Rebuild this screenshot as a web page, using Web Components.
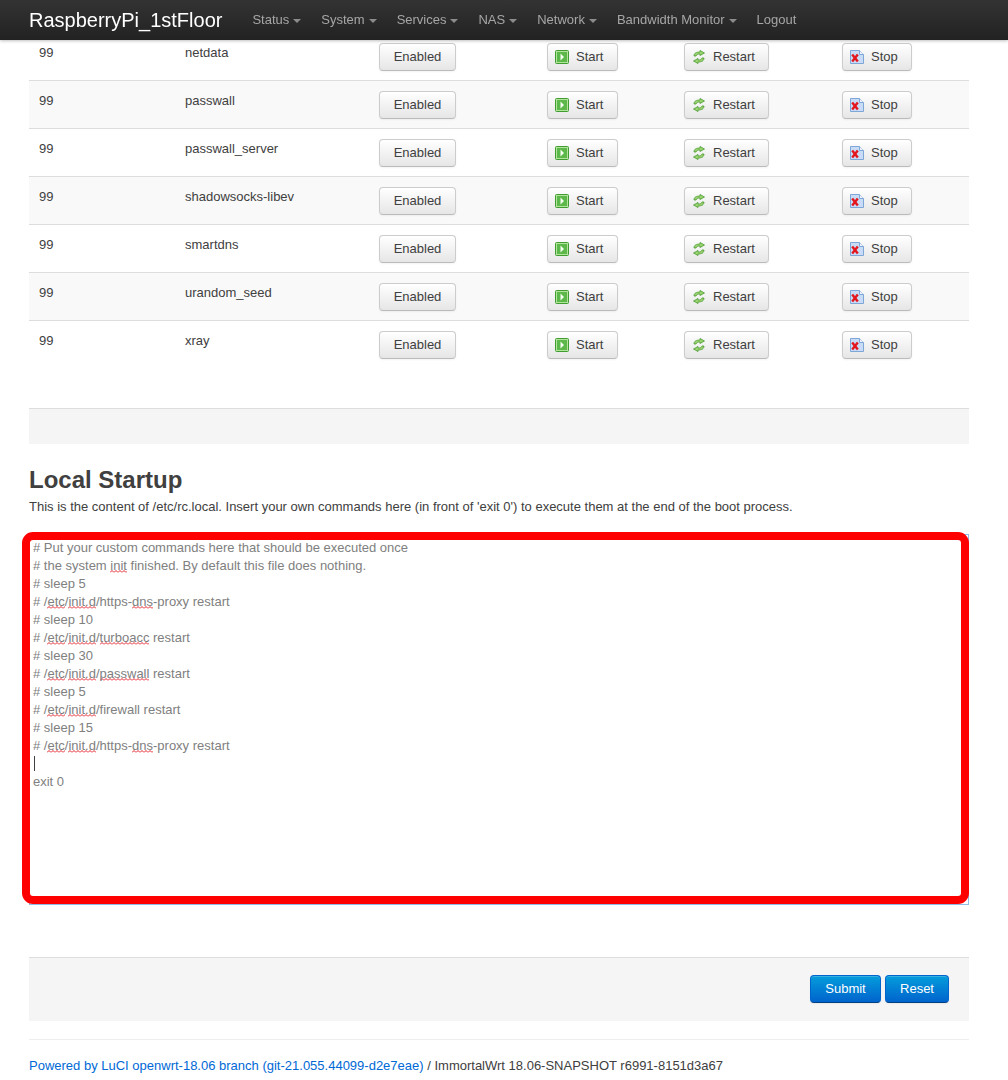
<!DOCTYPE html>
<html lang="en">
<head>
<meta charset="utf-8">
<title>RaspberryPi_1stFloor - Startup</title>
<style>
  html, body { margin: 0; background: #fff; }
  body { font: 13px/18px "Liberation Sans", Arial, sans-serif; color: #404040; }
</style>
</head>
<body>

<luci-navbar brand="RaspberryPi_1stFloor">
  <nav-item menu>Status</nav-item>
  <nav-item menu>System</nav-item>
  <nav-item menu>Services</nav-item>
  <nav-item menu>NAS</nav-item>
  <nav-item menu>Network</nav-item>
  <nav-item menu>Bandwidth Monitor</nav-item>
  <nav-item>Logout</nav-item>
</luci-navbar>

<luci-page>
  <init-table>
    <init-row prio="99" name="netdata"></init-row>
    <init-row prio="99" name="passwall" odd></init-row>
    <init-row prio="99" name="passwall_server"></init-row>
    <init-row prio="99" name="shadowsocks-libev" odd></init-row>
    <init-row prio="99" name="smartdns"></init-row>
    <init-row prio="99" name="urandom_seed" odd></init-row>
    <init-row prio="99" name="xray"></init-row>
  </init-table>
  <luci-bar slim></luci-bar>
  <local-startup>
    <span slot="title">Local Startup</span>
    <span slot="desc">This is the content of /etc/rc.local. Insert your own commands here (in front of 'exit 0') to execute them at the end of the boot process.</span>
    <code-box>
      <code-line># Put your custom commands here that should be executed once</code-line>
      <code-line># the system <spell-err>init</spell-err> finished. By default this file does nothing.</code-line>
      <code-line># sleep 5</code-line>
      <code-line># /<spell-err>etc</spell-err>/<spell-err>init.d</spell-err>/https-<spell-err>dns</spell-err>-proxy restart</code-line>
      <code-line># sleep 10</code-line>
      <code-line># /<spell-err>etc</spell-err>/<spell-err>init.d</spell-err>/<spell-err>turboacc</spell-err> restart</code-line>
      <code-line># sleep 30</code-line>
      <code-line># /<spell-err>etc</spell-err>/<spell-err>init.d</spell-err>/<spell-err>passwall</spell-err> restart</code-line>
      <code-line># sleep 5</code-line>
      <code-line># /<spell-err>etc</spell-err>/<spell-err>init.d</spell-err>/firewall restart</code-line>
      <code-line># sleep 15</code-line>
      <code-line># /<spell-err>etc</spell-err>/<spell-err>init.d</spell-err>/https-<spell-err>dns</spell-err>-proxy restart</code-line>
      <code-line><text-caret></text-caret></code-line>
      <code-line>exit 0</code-line>
    </code-box>
  </local-startup>
  <luci-bar>
    <luci-btn kind="primary" width="71">Submit</luci-btn>
    <luci-btn kind="primary" width="64">Reset</luci-btn>
  </luci-bar>
  <luci-footer>
    <a href="#">Powered by LuCI openwrt-18.06 branch (git-21.055.44099-d2e7eae)</a> / ImmortalWrt 18.06-SNAPSHOT r6991-8151d3a67
  </luci-footer>
</luci-page>

<script>
const ARROW = "M1 6C1 3 3.500 2 7 2V.5L11.500 3 7 5.500V4C5 4 3.500 4.500 3 6Z";

const ICONS = {
  start: `<svg width="14" height="14" viewBox="0 0 14 14">
      <rect x=".5" y=".5" width="13" height="13" rx="1" fill="#b5e49c" stroke="#3e9c31"/>
      <rect x="2" y="2" width="10" height="10" fill="#5cb84a"/>
      <path d="M5.500 3.500 9 7l-3.500 3.500z" fill="#f4fff0"/>
    </svg>`,
  restart: `<svg width="12" height="14" viewBox="0 0 12 14" style="margin:0 8px 0 1px">
      <g fill="#9bd46e" stroke="#4a9a35" stroke-width=".8" stroke-linejoin="round">
        <path d="${ARROW}"/>
        <path transform="rotate(180 6 7)" d="${ARROW}"/>
      </g>
    </svg>`,
  stop: `<svg width="14" height="14" viewBox="0 0 14 14">
      <path d="M.5.500H9.500L13.500 4.500V13.500H.5z" fill="#c8dcf5" stroke="#7fa6d8"/>
      <path d="M9.500.500V4.500H13.500" fill="#eef5fd" stroke="#7fa6d8"/>
      <path d="M2.200 4.500 7.800 11.500M7.800 4.500 2.200 11.500" stroke="#e3161e" stroke-width="2.400" fill="none"/>
    </svg>`
};

class LuciNavbar extends HTMLElement {
  constructor() {
    super();
    this.attachShadow({ mode: "open" });
  }
  connectedCallback() {
    this.shadowRoot.innerHTML = `
      <style>
        :host {
          position: fixed; top: 0; left: 0; right: 0; z-index: 10;
          display: flex; align-items: center;
          height: 40px; box-sizing: border-box;
          padding-left: 29px;
          background: linear-gradient(#333, #222);
          box-shadow: 0 1px 3px rgba(0,0,0,.25);
        }
        .brand { font-size: 20px; line-height: 40px; color: #fff; margin-right: 20px; }
        nav { display: flex; }
      </style>
      <span class="brand">${this.getAttribute("brand")}</span>
      <nav><slot></slot></nav>`;
  }
}

class NavItem extends HTMLElement {
  constructor() {
    super();
    this.attachShadow({ mode: "open" });
  }
  connectedCallback() {
    this.shadowRoot.innerHTML = `
      <style>
        :host { display: flex; align-items: center; padding: 0 10px; color: #a6a6a6; font-size: 13px; line-height: 40px; }
        .caret { margin: 1px 0 0 4px; border: 4px solid transparent; border-top-color: #8c8c8c; border-bottom: 0; }
      </style>
      <slot></slot>${this.hasAttribute("menu") ? '<span class="caret"></span>' : ""}`;
  }
}

class LuciPage extends HTMLElement {
  constructor() {
    super();
    this.attachShadow({ mode: "open" });
    this.shadowRoot.innerHTML = `
      <style>:host { display: block; padding: 32px 39px 0 29px; }</style>
      <slot></slot>`;
  }
}

class InitTable extends HTMLElement {
  constructor() {
    super();
    this.attachShadow({ mode: "open" });
    this.shadowRoot.innerHTML = `
      <style>:host { display: block; margin-bottom: 40px; }</style>
      <slot></slot>`;
  }
}

class InitRow extends HTMLElement {
  constructor() {
    super();
    this.attachShadow({ mode: "open" });
  }
  connectedCallback() {
    this.shadowRoot.innerHTML = `
      <style>
        :host {
          display: grid;
          grid-template-columns: 146px 194px 168px 137px 158px 137px;
          height: 48px; box-sizing: border-box;
          border-top: 1px solid #ddd;
          background: ${this.hasAttribute("odd") ? "#f9f9f9" : "#fff"};
        }
        div { padding: 11px 10px 0; }
        .b { padding-top: 10px; }
      </style>
      <div>${this.getAttribute("prio")}</div>
      <div>${this.getAttribute("name")}</div>
      <div class="b"><luci-btn width="77">Enabled</luci-btn></div>
      <div class="b"><luci-btn icon="start" width="71">Start</luci-btn></div>
      <div class="b"><luci-btn icon="restart" width="85">Restart</luci-btn></div>
      <div class="b"><luci-btn icon="stop" width="70">Stop</luci-btn></div>`;
  }
}

class LuciBtn extends HTMLElement {
  constructor() {
    super();
    this.attachShadow({ mode: "open" });
  }
  connectedCallback() {
    const icon = this.getAttribute("icon");
    const primary = this.getAttribute("kind") === "primary";
    this.shadowRoot.innerHTML = `
      <style>
        :host {
          display: inline-flex; align-items: center;
          justify-content: ${icon ? "flex-start" : "center"};
          width: ${this.getAttribute("width")}px;
          height: 28px; box-sizing: border-box;
          padding: 0 0 1px ${icon ? "7px" : "0"};
          border: 1px solid;
          border-color: ${primary ? "#0064cd #0064cd #003f81" : "#ccc #ccc #bbb"};
          border-radius: 4px;
          background: ${primary ? "linear-gradient(#049cdb, #0064cd)" : "linear-gradient(#fff, #e6e6e6)"};
          color: ${primary ? "#fff" : "#404040"};
          box-shadow: inset 0 1px 0 rgba(255,255,255,.2), 0 1px 2px rgba(0,0,0,.05);
        }
        svg { display: block; margin-right: 7px; flex: none; }
      </style>
      ${icon ? ICONS[icon] : ""}<slot></slot>`;
  }
}

class LuciBar extends HTMLElement {
  constructor() {
    super();
    this.attachShadow({ mode: "open" });
  }
  connectedCallback() {
    const slim = this.hasAttribute("slim");
    this.shadowRoot.innerHTML = `
      <style>
        :host {
          display: flex; justify-content: flex-end; gap: 4px;
          box-sizing: border-box;
          height: ${slim ? "36px" : "64px"};
          padding: 17px 20px 0;
          background: #f5f5f5;
          border-top: 1px solid #ddd;
        }
      </style>
      <slot></slot>`;
  }
}

class LocalStartup extends HTMLElement {
  constructor() {
    super();
    this.attachShadow({ mode: "open" });
    this.shadowRoot.innerHTML = `
      <style>
        :host { display: block; padding-top: 22px; margin-bottom: 52px; }
        h2 { margin: 0; font-size: 24px; line-height: 28px; font-weight: 700; color: #404040; }
        p { margin: 4px 0 18px; }
      </style>
      <h2><slot name="title"></slot></h2>
      <p><slot name="desc"></slot></p>
      <slot></slot>`;
  }
}

class CodeBox extends HTMLElement {
  constructor() {
    super();
    this.attachShadow({ mode: "open" });
    this.shadowRoot.innerHTML = `
      <style>
        :host {
          display: block; position: relative;
          height: 371px; box-sizing: border-box;
          padding: 4px 3px;
          border: 1px solid #8fbbe8;
          color: #808080;
        }
        /* the red marker drawn over the textarea in the screenshot */
        .mark {
          position: absolute; left: -8px; top: -3px; right: -1px; bottom: 0;
          border: 8px solid #f00; border-radius: 11px;
          pointer-events: none;
        }
      </style>
      <slot></slot>
      <div class="mark"></div>`;
  }
}

class CodeLine extends HTMLElement {
  constructor() {
    super();
    this.attachShadow({ mode: "open" });
    this.shadowRoot.innerHTML = `
      <style>:host { display: block; height: 18px; white-space: nowrap; }</style>
      <slot></slot>`;
  }
}

// no whitespace in this shadow root: it sits inline inside a line of text
class SpellErr extends HTMLElement {
  constructor() {
    super();
    this.attachShadow({ mode: "open" });
    this.shadowRoot.innerHTML = `<style>:host { display: inline; background: url("data:image/svg+xml,%3Csvg xmlns='http://www.w3.org/2000/svg' width='4' height='3'%3E%3Cpath d='M0 2.500 2 .5 4 2.500' fill='none' stroke='%23e0202a'/%3E%3C/svg%3E") 0 100% / 4px 3px repeat-x; }</style><slot></slot>`;
  }
}

class TextCaret extends HTMLElement {
  constructor() {
    super();
    this.attachShadow({ mode: "open" });
    this.shadowRoot.innerHTML = `<style>:host { display: inline-block; width: 1px; height: 15px; margin-left: 1px; background: #404040; vertical-align: -3px; }</style>`;
  }
}

class LuciFooter extends HTMLElement {
  constructor() {
    super();
    this.attachShadow({ mode: "open" });
    this.shadowRoot.innerHTML = `
      <style>
        :host { display: block; margin-top: 18px; padding-top: 17px; border-top: 1px solid #eee; }
        ::slotted(a) { color: #0069d6; text-decoration: none; }
      </style>
      <slot></slot>`;
  }
}

customElements.define("nav-item", NavItem);
customElements.define("luci-navbar", LuciNavbar);
customElements.define("luci-page", LuciPage);
customElements.define("luci-btn", LuciBtn);
customElements.define("init-table", InitTable);
customElements.define("init-row", InitRow);
customElements.define("luci-bar", LuciBar);
customElements.define("local-startup", LocalStartup);
customElements.define("code-line", CodeLine);
customElements.define("spell-err", SpellErr);
customElements.define("text-caret", TextCaret);
customElements.define("code-box", CodeBox);
customElements.define("luci-footer", LuciFooter);
</script>
</body>
</html>
